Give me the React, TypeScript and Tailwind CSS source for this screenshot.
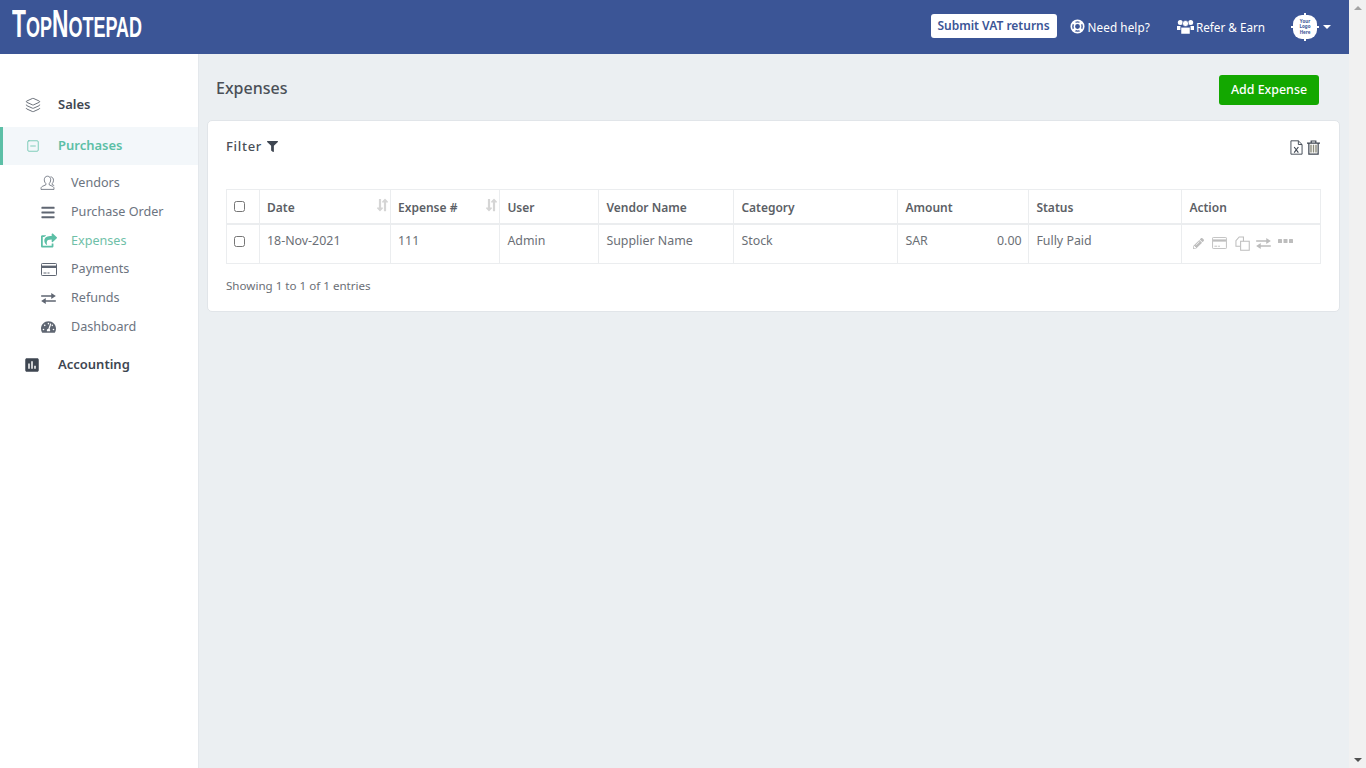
import { Layers, SquareMinus } from "lucide-react";
import {
  FaBars,
  FaFilter,
  FaLongArrowAltDown,
  FaLongArrowAltUp,
  FaPencilAlt,
  FaShareSquare,
  FaTachometerAlt,
} from "react-icons/fa";
import { MdInsertChart } from "react-icons/md";
import type { ReactNode } from "react";

const font = { fontFamily: '"Noto Sans", sans-serif' };

const VendorIcon = () => (
  <svg viewBox="0 0 16 16" className="h-[16px] w-[16px]" fill="none" stroke="currentColor" strokeWidth="0.8">
    <path d="M7.5 1.2c2 0 3.2 1.5 3.2 3.6 0 1.6-.6 3-1.5 3.8v1.2l3.3 1.5c.9.4 1.5 1.2 1.5 2.2v.9H1v-.9c0-1 .6-1.8 1.5-2.2l3.4-1.5V8.600C5 7.800 4.300 6.400 4.300 4.800c0-2.100 1.200-3.600 3.200-3.600z" />
    <path d="M10.500 1.800c1.800.1 3 1.500 3 3.400 0 1.400-.5 2.700-1.300 3.400v1l2 1" />
  </svg>
);

const ExcelIcon = () => (
  <svg viewBox="0 0 14 16" className="h-[15px] w-[13px]" fill="none" stroke="#3e4651" strokeWidth="1">
    <path d="M1 .8h8l4 4v10.400H1z" />
    <path d="M9 .8v4h4" />
    <path d="M4.500 7.500l4.500 6M9 7.500l-4.500 6" strokeWidth="1.200" />
  </svg>
);

const TrashIcon = () => (
  <svg viewBox="0 0 14 16" className="h-[15px] w-[13px]" fill="none" stroke="#3e4651" strokeWidth="1.300">
    <path d="M0 3.300h14M4.500 3.300V1h5v2.300M2 3.300v11.900h10V3.300" />
    <path d="M4.300 5v8.500M7 5v8.500M9.700 5v8.500" stroke="#8a8a7a" strokeWidth="1.500" />
  </svg>
);

const CopyIcon = () => (
  <svg viewBox="0 0 16 16" className="h-[15px] w-[15px]" fill="none" stroke="#bdbdbd" strokeWidth="1.100">
    <path d="M5.500 11H1V5l3.500-4H9v4.500" />
    <path d="M6 5.500h9.200V15.200H6z" />
  </svg>
);

const CardIcon = ({ className }: { className: string }) => (
  <svg viewBox="0 0 16 13" className={className} fill="none" stroke="currentColor" strokeWidth="1">
    <rect x="0.500" y="0.500" width="15" height="12" rx="0.800" />
    <path d="M1 3.800h14" strokeWidth="2.400" />
    <path d="M2.500 10h3M6.500 10h2" />
  </svg>
);

const SwapIcon = ({ className }: { className: string }) => (
  <svg viewBox="0 0 16 12" className={className} fill="currentColor">
    <path d="M0 2.500h11V0l5 3.300-5 3.200V4.100H0z" />
    <path d="M16 7.900H5V5.500L0 8.700 5 12V9.500h11z" />
  </svg>
);

const DotsIcon = () => (
  <svg viewBox="0 0 15 4" className="-mt-[5px] h-[4px] w-[15px]" fill="#bdbdbd">
    <rect x="0" y="0" width="4" height="4" rx="0.600" />
    <rect x="5.500" y="0" width="4" height="4" rx="0.600" />
    <rect x="11" y="0" width="4" height="4" rx="0.600" />
  </svg>
);

const LifeRingIcon = () => (
  <svg viewBox="0 0 16 16" className="h-[15px] w-[15px]" fill="none" stroke="#fff">
    <circle cx="8" cy="8" r="6.600" strokeWidth="1.800" />
    <circle cx="8" cy="8" r="3.400" strokeWidth="1.600" />
    <path d="M3.300 3.300l2.400 2.400M12.700 3.300l-2.400 2.400M3.300 12.700l2.400-2.400M12.700 12.700l-2.400-2.400" strokeWidth="3" />
  </svg>
);

const UsersIcon = () => (
  <svg viewBox="0 0 17 15" className="h-[15px] w-[17px]" fill="#fff">
    <circle cx="3.300" cy="3.500" r="2.500" />
    <circle cx="13.700" cy="3.500" r="2.500" />
    <circle cx="8.500" cy="4.500" r="3" stroke="#3b5596" strokeWidth="0.600" />
    <path d="M0 7h3.500v4H0zM13.500 7H17v4h-3.500z" />
    <path d="M4 8.300h9V15H4z" stroke="#3b5596" strokeWidth="0.500" />
  </svg>
);

const SortIcon = () => (
  <span className="absolute right-[1px] top-[8px] flex text-[#d5d5d5]">
    <FaLongArrowAltDown className="-mr-[3px] h-[14px] w-[8px]" />
    <FaLongArrowAltUp className="h-[14px] w-[8px]" />
  </span>
);

const LogoBadge = () => (
  <div className="relative flex h-[24px] w-[24px] flex-col items-center justify-center rounded-[9px] bg-white text-[4.500px] font-bold leading-[5.500px] text-[#3b5596]">
    <span>Your</span>
    <span>Logo</span>
    <span>Here</span>
    <span className="absolute -top-[2px] left-[11px] h-[2px] w-[2px] bg-white" />
    <span className="absolute -bottom-[2px] left-[11px] h-[2px] w-[2px] bg-white" />
    <span className="absolute -left-[2px] top-[11px] h-[2px] w-[2px] bg-white" />
    <span className="absolute -right-[2px] top-[11px] h-[2px] w-[2px] bg-white" />
  </div>
);

const subItems: Array<{ icon: ReactNode; label: string; active?: boolean }> = [
  { icon: <VendorIcon />, label: "Vendors" },
  { icon: <FaBars className="ml-[1px] h-[15px] w-[14px]" />, label: "Purchase Order" },
  { icon: <FaShareSquare className="ml-[1px] h-[15px] w-[16px]" />, label: "Expenses", active: true },
  { icon: <CardIcon className="ml-[1px] h-[13px] w-[16px]" />, label: "Payments" },
  { icon: <SwapIcon className="ml-[1px] h-[11px] w-[15px]" />, label: "Refunds" },
  { icon: <FaTachometerAlt className="ml-[1px] h-[14px] w-[15px]" />, label: "Dashboard" },
];

const headers = ["Date", "Expense #", "User", "Vendor Name", "Category", "Amount", "Status", "Action"];
const widths = ["w-[33px]", "w-[131px]", "w-[109px]", "w-[99px]", "w-[135px]", "w-[164px]", "w-[131px]", "w-[153px]", "w-[139px]"];
const rowCell = "border border-[#ebedef] px-[7.400px] pb-[5px]";
const rowCellTight = "border border-[#ebedef] px-[7px] pb-[5px]";

const Sidebar = () => (
  <aside className="w-[199px] shrink-0 border-r border-[#e4e8ec] bg-white pt-[32px]">
    <div className="flex h-[38px] items-center pl-[25px] text-[13px] font-semibold text-[#3e4651]">
      <Layers className="h-[16px] w-[16px] text-[#555b66]" strokeWidth={1.300} />
      <span className="ml-[17px]">Sales</span>
    </div>
    <div className="mt-[3px] flex h-[38px] items-center border-l-[3px] border-[#5cbfa6] bg-[#f3f7fa] pl-[23px] text-[13px] font-semibold text-[#5cbfa6]">
      <SquareMinus className="h-[14px] w-[14px]" strokeWidth={1.300} />
      <span className="ml-[18px]">Purchases</span>
    </div>
    <ul className="mt-[4px]">
      {subItems.map((item) => (
        <li
          key={item.label}
          className={`flex h-[28.800px] items-center text-[12.600px] ${item.active ? "text-[#6fbfa8]" : "text-[#6c7480]"}`}
        >
          <span className={`ml-[40px] flex w-[31px] items-center ${item.active ? "text-[#5cbfa6]" : "text-[#5f6672]"}`}>
            {item.icon}
          </span>
          {item.label}
        </li>
      ))}
    </ul>
    <div className="mt-[13.200px] flex h-[20px] items-center pl-[25px] text-[13px] font-semibold text-[#3e4651]">
      <MdInsertChart className="-ml-[2px] h-[18px] w-[18px]" />
      <span className="ml-[17px]">Accounting</span>
    </div>
  </aside>
);

const Table = () => (
  <table className="w-[1094px] table-fixed border-collapse text-[12.400px]">
    <colgroup>
      {widths.map((w, i) => (
        <col key={i} className={w} />
      ))}
    </colgroup>
    <thead>
      <tr className="h-[35px] border-b-2 border-[#ebedef]">
        <th className="border border-[#ebedef] align-middle">
          <input type="checkbox" className="ml-[7px] block h-[11px] w-[11px]" />
        </th>
        {headers.map((h, i) => (
          <th
            key={h}
            className={`relative border border-[#ebedef] pt-[3px] text-left text-[12px] font-semibold text-[#5c5f66] ${i < 2 ? "px-[7px]" : "px-[7.400px]"}`}
          >
            {h}
            {i < 2 && <SortIcon />}
          </th>
        ))}
      </tr>
    </thead>
    <tbody>
      <tr className="h-[39px] text-[#6b6f76]">
        <td className="border border-[#ebedef] pb-[4px]">
          <input type="checkbox" className="ml-[7px] block h-[11px] w-[11px]" />
        </td>
        <td className={rowCellTight}>18-Nov-2021</td>
        <td className={rowCellTight}>111</td>
        <td className={rowCell}>Admin</td>
        <td className={rowCell}>Supplier Name</td>
        <td className={rowCell}>Stock</td>
        <td className={rowCell}>
          <div className="flex justify-between">
            <span>SAR</span>
            <span className="-mr-[1px]">0.00</span>
          </div>
        </td>
        <td className={rowCell}>Fully Paid</td>
        <td className="border border-[#ebedef] pb-[1px] pl-[11px]">
          <div className="flex items-center gap-[7px] text-[#bdbdbd]">
            <FaPencilAlt className="h-[11px] w-[11px]" />
            <CardIcon className="ml-[1px] h-[12px] w-[15px]" />
            <span className="ml-[1px]">
              <CopyIcon />
            </span>
            <SwapIcon className="-ml-[1px] h-[11px] w-[15px]" />
            <DotsIcon />
          </div>
        </td>
      </tr>
    </tbody>
  </table>
);

export default function App() {
  return (
    <div className="flex h-screen overflow-hidden" style={font}>
      <div className="flex min-w-0 flex-1 flex-col">
        <header className="flex h-[54px] shrink-0 items-center bg-[#3b5596] pl-[12px] text-[11.700px] text-white">
          <div
            className="-mt-[6px] flex h-[38px] w-[130px] origin-left scale-x-[0.6] items-baseline whitespace-nowrap font-bold leading-none"
            style={{ fontFamily: '"Liberation Sans", sans-serif' }}
          >
            <span className="text-[38px]">T</span>
            <span className="text-[30px]">OP</span>
            <span className="text-[38px]">N</span>
            <span className="text-[30px]">OTEPAD</span>
          </div>
          <div className="ml-auto flex items-center">
            <button className="mb-[3px] h-[24px] w-[126px] rounded-[3px] bg-white text-[12px] font-semibold text-[#3b5596]">
              Submit VAT returns
            </button>
            <span className="ml-[13px] flex items-center gap-[3px]">
              <LifeRingIcon />
              <span className="pt-[2px] tracking-[0.1px]">Need help?</span>
            </span>
            <span className="ml-[27px] flex items-center gap-[2px]">
              <UsersIcon />
              <span className="pt-[2px]">Refer &amp; Earn</span>
            </span>
            <span className="ml-[27px] mr-[18px] flex items-center gap-[6px] pl-[1px]">
              <LogoBadge />
              <span className="h-0 w-0 border-x-[4px] border-t-[4px] border-x-transparent border-t-white" />
            </span>
          </div>
        </header>
        <div className="flex min-h-0 flex-1">
          <Sidebar />
          <main className="min-w-0 flex-1 bg-[#ebeff2] pl-[8px] pr-[9px]">
            <div className="flex h-[66px] items-center justify-between pl-[9px] pr-[21px]">
              <h1 className="mt-[1px] text-[16px] font-medium text-[#4a4f57]">Expenses</h1>
              <button className="mt-[5px] h-[30px] w-[100px] rounded-[3px] bg-[#13a800] pt-[1px] text-[12.400px] font-medium text-white">
                Add Expense
              </button>
            </div>
            <section className="h-[192px] rounded-[5px] border border-[#e1e5e9] bg-white px-[18px] pt-[16px]">
              <div className="flex items-start justify-between pr-[1px]">
                <div className="flex items-center gap-[5px] text-[13px] font-medium tracking-[0.7px] text-[#4a4f57]">
                  Filter
                  <FaFilter className="h-[11px] w-[11px] text-[#3e4651]" />
                </div>
                <div className="mt-[3px] flex gap-[4.500px]">
                  <ExcelIcon />
                  <TrashIcon />
                </div>
              </div>
              <div className="mt-[32px]">
                <Table />
              </div>
              <p className="mt-[13px] text-[11.600px] text-[#6b6f76]">Showing 1 to 1 of 1 entries</p>
            </section>
          </main>
        </div>
      </div>
      <div className="flex w-[17px] shrink-0 flex-col items-center justify-between bg-[#f1f1f1] py-[6px]">
        <span className="h-0 w-0 border-x-[4px] border-b-[4px] border-x-transparent border-b-[#a3a3a3]" />
        <span className="h-0 w-0 border-x-[4px] border-t-[4px] border-x-transparent border-t-[#505050]" />
      </div>
    </div>
  );
}
